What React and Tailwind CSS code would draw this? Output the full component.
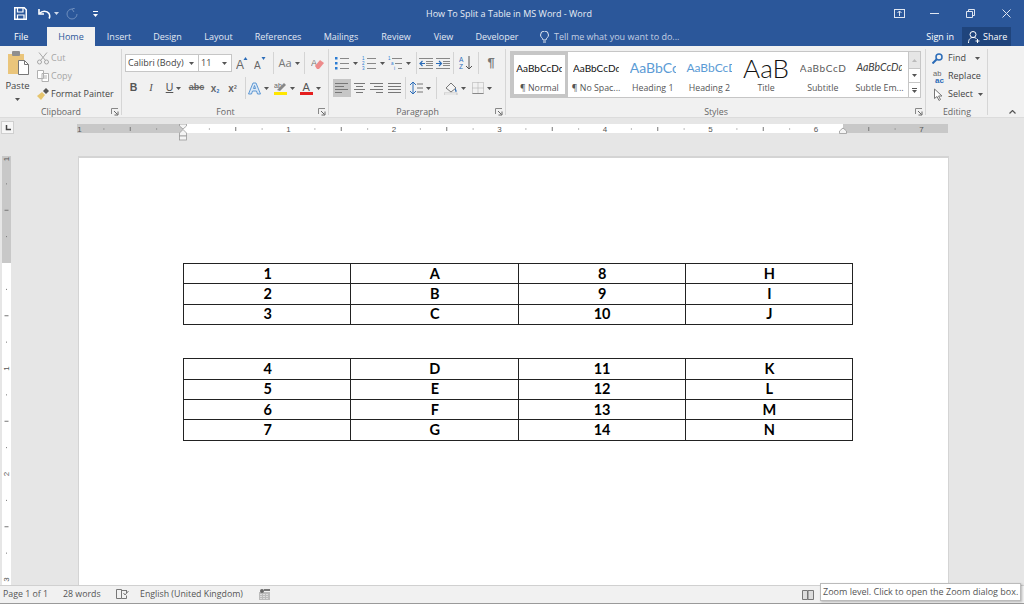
import React from 'react';

const Caret = ({ color = '#555' }) => (
  <svg width="5" height="3" viewBox="0 0 5 3" className="shrink-0"><path d="M0 0h5L2.5 3z" fill={color} /></svg>
);

const Launcher = () => (
  <svg width="8" height="8" viewBox="0 0 8 8" className="absolute right-[3px] bottom-[1px]">
    <path d="M.5 6V.5H7" fill="none" stroke="#888" />
    <path d="M3 3l3.5 3.5M7 3.5V7H3.5" fill="none" stroke="#666" />
  </svg>
);

const Sep = ({ h = 'h-[22px]' }) => <div className={`w-px ${h} bg-[#d4d4d4] shrink-0`} />;

// list glyph used by the paragraph buttons
const Lines = ({ kind }) => {
  const rows = {
    left: [[0, 13], [0, 9], [0, 13], [0, 7]],
    center: [[1, 11], [3, 7], [1, 11], [3, 7]],
    right: [[0, 13], [4, 9], [0, 13], [6, 7]],
    just: [[0, 13], [0, 13], [0, 13], [0, 13]],
  }[kind];
  return (
    <svg width="14" height="10" viewBox="0 0 14 10">
      {rows.map(([x, w], i) => <rect key={i} x={x} y={i * 3} width={w} height="1" fill="#777" />)}
    </svg>
  );
};

const ListIcon = ({ type }) => (
  <svg width="15" height="14" viewBox="0 0 15 14">
    {[1, 6, 11].map((y, i) => (
      <g key={y}>
        {type === 'bullet' && <rect x="0" y={y} width="2.5" height="2.5" fill="#2b7cd3" />}
        {type === 'number' && <text x="0" y={y + 3} fontSize="4.5" fill="#2b7cd3" fontFamily="Liberation Sans">{i + 1}</text>}
        {type === 'multi' && <text x={i * 3} y={y + 3} fontSize="4.5" fill="#2b7cd3" fontFamily="Liberation Sans">{['1', 'a', 'i'][i]}</text>}
        <rect x={type === 'multi' ? 4 + i * 3 : 5} y={y + 1} width={type === 'multi' ? 10 - i * 3 : 9} height="1" fill="#888" />
      </g>
    ))}
  </svg>
);

const Indent = ({ dir }) => (
  <svg width="14" height="11" viewBox="0 0 14 11">
    {[0, 10].map((y) => <rect key={y} x="0" y={y} width="14" height="1" fill="#888" />)}
    {[3, 5, 7].map((y) => <rect key={y} x="7" y={y} width="7" height="1" fill="#888" />)}
    <path d={dir === 'l' ? 'M6 5.5H1M3.5 3L1 5.5 3.5 8' : 'M0 5.5h5M3 3l2.5 2.5L3 8'} fill="none" stroke="#2b6cb8" strokeWidth="1.2" />
  </svg>
);

const Cell = ({ w, children, active }) => (
  <div className={`${w} h-[18px] shrink-0 flex items-center justify-center gap-[3px] ${active ? 'bg-[#c6c6c6]' : ''}`}>{children}</div>
);

const Group = ({ w, label, launcher, children }) => (
  <div className={`${w} h-full shrink-0 flex flex-col relative`}>
    <div className="flex-1 min-h-0">{children}</div>
    <div className="h-[9px] text-center text-[8.800px] leading-[9px] text-[#666] whitespace-nowrap">{label}</div>
    {launcher && <Launcher />}
    <div className="absolute right-0 top-[3px] bottom-[2px] w-px bg-[#d6d6d6]" />
  </div>
);

const ClipboardGroup = () => (
  <Group w="w-[122px]" label="Clipboard" launcher>
    <div className="flex h-full">
      <div className="w-[35px] flex flex-col items-center pt-[5px]">
        <svg width="24" height="25" viewBox="0 0 24 25" className="ml-[3px]">
          <path d="M1 3h16v20H1z" fill="#eac57b" />
          <rect x="5" y="0" width="8" height="5" rx="1" fill="#8f8f8f" />
          <path d="M11.500 9.500h6l4 4v10h-10z" fill="#fff" stroke="#777" />
          <path d="M17.500 9.500v4h4" fill="none" stroke="#777" />
        </svg>
        <div className="text-[9.500px] leading-[13px] mt-[3px] text-[#444]">Paste</div>
        <div className="mt-[6px]"><Caret /></div>
      </div>
      <div className="flex flex-col pt-[3px] pl-[2px] text-[9px] leading-[18px]">
        <div className="flex items-center gap-[2px] h-[18px] text-[#a6a6a6]">
          <svg width="12" height="13" viewBox="0 0 12 13"><path d="M2 .5l6.500 8M10 .5L3.500 8.500" stroke="#a6a6a6" fill="none" /><circle cx="2.500" cy="10" r="2" fill="none" stroke="#a6a6a6" /><circle cx="9.500" cy="10" r="2" fill="none" stroke="#a6a6a6" /></svg>
          Cut
        </div>
        <div className="flex items-center gap-[2px] h-[18px] text-[#a6a6a6]">
          <svg width="12" height="12" viewBox="0 0 12 12"><path d="M.5.500h6v8h-6zM5 3.500h6.500v8H5z" fill="#fff" stroke="#b0b0b0" /><path d="M6.500 6h3.500M6.500 8h3.500" stroke="#b0b0b0" /></svg>
          Copy
        </div>
        <div className="flex items-center gap-[2px] h-[18px] text-[#444] whitespace-nowrap">
          <svg width="12" height="12" viewBox="0 0 12 12"><path d="M0 8l5-4 3 3-4 5z" fill="#e6c56e" /><path d="M6 3l3-3 3 3-3 3z" fill="#555" /></svg>
          Format Painter
        </div>
      </div>
    </div>
  </Group>
);

const FontGroup = () => (
  <Group w="w-[207px]" label="Font" launcher>
    <div className="pl-[3px] pt-[8px] flex flex-col">
      <div className="flex items-center h-[18px]">
        <div className="w-[74px] h-[18px] bg-white border border-[#c6c6c6] flex items-center justify-between px-[2px] pr-[4px] text-[9px] text-[#444] whitespace-nowrap">Calibri (Body)<Caret /></div>
        <div className="w-[33px] h-[18px] bg-white border border-l-0 border-[#c6c6c6] flex items-center justify-between px-[2px] pr-[4px] text-[9px] text-[#444]">11<Caret /></div>
        <Cell w="w-[18px] ml-[1px]">
          <svg width="13" height="13" viewBox="0 0 13 13"><text x="0" y="12" fontSize="12" fill="#666" fontFamily="Liberation Sans">A</text><path d="M7.500 3L9.500 0l2 3z" fill="#2b6cb8" /></svg>
        </Cell>
        <Cell w="w-[18px]">
          <svg width="13" height="13" viewBox="0 0 13 13"><text x="0" y="12" fontSize="10" fill="#666" fontFamily="Liberation Sans">A</text><path d="M7.500 0l2 3 2-3z" fill="#2b6cb8" /></svg>
        </Cell>
        <div className="w-[4px]" /><Sep />
        <Cell w="w-[30px]"><span className="text-[11px] text-[#777]">Aa</span><Caret /></Cell>
        <Sep />
        <Cell w="w-[24px]">
          <svg width="13" height="13" viewBox="0 0 13 13"><text x="0" y="9" fontSize="9" fill="#777" fontFamily="Liberation Sans">A</text><path d="M4 9l5-6 4 3-5 6H6z" fill="#ed8b8b" /></svg>
        </Cell>
      </div>
      <div className="flex items-center h-[18px] mt-[7px]">
        <Cell w="w-[17px]"><span className="text-[10.500px] font-bold text-[#555] font-['Liberation_Sans']">B</span></Cell>
        <Cell w="w-[18px]"><span className="text-[10.500px] italic text-[#555] font-['Liberation_Serif']">I</span></Cell>
        <Cell w="w-[27px]"><span className="text-[10.500px] underline text-[#555] font-['Liberation_Sans']">U</span><Caret /></Cell>
        <Cell w="w-[19px]"><span className="text-[9px] font-bold text-[#666] line-through font-['Liberation_Sans']">abc</span></Cell>
        <Cell w="w-[18px]"><span className="text-[10px] font-bold text-[#666] font-['Liberation_Sans']">x<sub className="text-[5px] text-[#2b6cb8]">2</sub></span></Cell>
        <Cell w="w-[17px]"><span className="text-[10px] font-bold text-[#666] font-['Liberation_Sans']">x<sup className="text-[5px] text-[#666]">2</sup></span></Cell>
        <div className="w-[4px]" /><Sep />
        <Cell w="w-[25px]">
          <svg width="13" height="13" viewBox="0 0 13 13"><path d="M5 1h3l4.500 11h-3l-1-3H4.500l-1 3h-3zM5.500 6.500h2L6.500 3.500z" fill="#dbe8f6" stroke="#4f8fd0" strokeWidth=".9" /></svg>
          <Caret />
        </Cell>
        <Cell w="w-[26px]">
          <svg width="13" height="14" viewBox="0 0 13 14"><text x="0" y="7" fontSize="7" fill="#666" fontFamily="Liberation Sans">ab</text><path d="M3 9l7-7 2 2-6 6z" fill="#888" /><rect x="0" y="11" width="13" height="3" fill="#ffe600" /></svg>
          <Caret />
        </Cell>
        <Cell w="w-[26px]">
          <svg width="13" height="14" viewBox="0 0 13 14"><text x="2.500" y="10" fontSize="11" fill="#555" fontFamily="Liberation Sans">A</text><rect x="0" y="11" width="13" height="3" fill="#e51f1f" /></svg>
          <Caret />
        </Cell>
      </div>
    </div>
  </Group>
);

const ParagraphGroup = () => (
  <Group w="w-[177px]" label="Paragraph" launcher>
    <div className="pl-[4px] pt-[8px] flex flex-col">
      <div className="flex items-center h-[18px]">
        <Cell w="w-[27px]"><ListIcon type="bullet" /><Caret /></Cell>
        <Cell w="w-[26px]"><ListIcon type="number" /><Caret /></Cell>
        <Cell w="w-[27px]"><ListIcon type="multi" /><Caret /></Cell>
        <div className="w-[3px]" /><Sep />
        <Cell w="w-[17px]"><Indent dir="l" /></Cell>
        <Cell w="w-[17px]"><Indent dir="r" /></Cell>
        <div className="w-[2px]" /><Sep />
        <Cell w="w-[24px]">
          <svg width="14" height="14" viewBox="0 0 14 14"><text x="0" y="6" fontSize="6.500" fill="#2b6cb8" fontFamily="Liberation Sans">A</text><text x="0" y="13" fontSize="6.500" fill="#2b6cb8" fontFamily="Liberation Sans">Z</text><path d="M10 0v13M7 10l3 3 3-3" fill="none" stroke="#555" /></svg>
        </Cell>
        <Sep />
        <Cell w="w-[24px]"><span className="text-[13px] font-bold text-[#777] font-['Liberation_Sans']">¶</span></Cell>
      </div>
      <div className="flex items-center h-[18px] mt-[7px]">
        <Cell w="w-[18px]" active><Lines kind="left" /></Cell>
        <Cell w="w-[17px]"><Lines kind="center" /></Cell>
        <Cell w="w-[18px]"><Lines kind="right" /></Cell>
        <Cell w="w-[17px]"><Lines kind="just" /></Cell>
        <div className="w-[2px]" /><Sep />
        <Cell w="w-[27px] ml-[1px]">
          <svg width="13" height="13" viewBox="0 0 13 13"><path d="M3 0v12M0 3l3-3 3 3M0 9l3 3 3-3" fill="none" stroke="#2b6cb8" /><path d="M7 2h6M7 6h6M7 10h6" stroke="#777" /></svg>
          <Caret />
        </Cell>
        <div className="w-[2px]" /><Sep />
        <Cell w="w-[27px] ml-[4px]">
          <svg width="14" height="14" viewBox="0 0 14 14"><path d="M2 7l5-5 5 5-5 4z" fill="#f4f4f4" stroke="#777" /><path d="M11 7c2 2 2 4 1 4s-1-2-1-4z" fill="#2b6cb8" /><rect x="0" y="12" width="13" height="2" fill="#fff" stroke="#999" strokeWidth=".5" /></svg>
          <Caret />
        </Cell>
        <Cell w="w-[27px]">
          <svg width="12" height="12" viewBox="0 0 12 12"><path d="M.5.500h11v11H.5zM6 .5v11M.5 6h11" fill="none" stroke="#aaa" strokeDasharray="1 1" /><path d="M.5 11.500h11" stroke="#888" /></svg>
          <Caret />
        </Cell>
      </div>
    </div>
  </Group>
);

const styleItems = [
  { s: 'AaBbCcDd', label: '¶ Normal', cls: 'text-[10px] text-[#111]' },
  { s: 'AaBbCcDd', label: '¶ No Spac...', cls: 'text-[10px] text-[#111]' },
  { s: 'AaBbCcDd', label: 'Heading 1', cls: 'text-[14px] text-[#5b9bd5]' },
  { s: 'AaBbCcDd', label: 'Heading 2', cls: 'text-[12px] text-[#5b9bd5]' },
  { s: 'AaB', label: 'Title', cls: 'text-[26px] text-[#111] font-light' },
  { s: 'AaBbCcDd', label: 'Subtitle', cls: 'text-[10px] text-[#5a5a5a] tracking-[0.6px]' },
  { s: 'AaBbCcDd', label: 'Subtle Em...', cls: 'text-[10.500px] text-[#404040] italic' },
];

const StylesGroup = () => (
  <Group w="w-[420px]" label="Styles" launcher>
    <div className="pl-[4px] pt-[5px] flex">
      <div className="h-[47px] w-[399px] bg-white border border-[#c6c6c6] flex overflow-hidden">
        {styleItems.map((it, i) => (
          <div key={i} className={`w-[56.700px] h-full shrink-0 flex flex-col items-center overflow-hidden ${i === 0 ? 'border-[3px] border-[#c6c6c6]' : 'border-[3px] border-white'}`}>
            <div className={`h-[25px] shrink-0 flex items-center w-[46px] overflow-hidden whitespace-nowrap font-['Lato'] leading-none ${it.cls}`}>{it.s}</div>
            <div className="text-[8.800px] leading-[12px] mt-[2px] text-[#555] whitespace-nowrap">{it.label}</div>
          </div>
        ))}
      </div>
      <div className="w-[12px] h-[47px] flex flex-col border border-l-0 border-[#c6c6c6] bg-white">
        <div className="h-[16px] bg-[#e6e6e6] flex items-center justify-center"><svg width="5" height="3" viewBox="0 0 5 3"><path d="M0 3h5L2.500 0z" fill="#bbb" /></svg></div>
        <div className="h-[15px] border-y border-[#c6c6c6] flex items-center justify-center"><Caret /></div>
        <div className="flex-1 flex flex-col items-center justify-center gap-[1px]"><div className="w-[5px] h-px bg-[#555]" /><Caret /></div>
      </div>
    </div>
  </Group>
);

const EditingGroup = () => (
  <Group w="w-[62px]" label="Editing">
    <div className="pt-[3px] pl-[6px] text-[9px] text-[#444] flex flex-col">
      <div className="h-[18px] flex items-center gap-[5px]">
        <svg width="11" height="11" viewBox="0 0 11 11"><circle cx="7" cy="4" r="3" fill="none" stroke="#2b6cb8" strokeWidth="1.500" /><path d="M5 6L.5 10.500" stroke="#2b6cb8" strokeWidth="2" /></svg>
        Find<span className="ml-[4px]"><Caret /></span>
      </div>
      <div className="h-[18px] flex items-center gap-[3px]">
        <svg width="13" height="13" viewBox="0 0 13 13"><text x="1" y="6" fontSize="7.500" fill="#666" fontFamily="Liberation Sans">ab</text><text x="3" y="12.500" fontSize="8" fontWeight="bold" fill="#2b6cb8" fontFamily="Liberation Sans">ac</text></svg>
        Replace
      </div>
      <div className="h-[18px] flex items-center gap-[5px]">
        <svg width="10" height="13" viewBox="0 0 10 13" className="ml-[1px]"><path d="M1.500 1v9.500l2.500-2 2 4 1.500-1-2-3.500h3.500z" fill="#fff" stroke="#777" /></svg>
        Select<Caret />
      </div>
    </div>
  </Group>
);

const TitleBar = () => (
  <div className="h-[27px] flex items-center relative text-white">
    <div className="w-[14px]" />
    <svg width="13" height="13" viewBox="0 0 13 13"><path d="M.75.750h9.500l2 2v9.500H.75z" fill="none" stroke="#fff" strokeWidth="1.500" /><path d="M3.500 1v4h5.500V1M3.500 12V8h6.500v4" fill="none" stroke="#fff" strokeWidth="1.200" /></svg>
    <svg width="13" height="12" viewBox="0 0 13 12" className="ml-[11px]"><path d="M1 1v5h5" fill="none" stroke="#fff" strokeWidth="1.600" /><path d="M1.500 5.500C4 2.500 9 2.500 11 5.500c1 2 1 3.500 0 5" fill="none" stroke="#fff" strokeWidth="1.600" /></svg>
    <div className="ml-[3px]"><Caret color="#cfd9ea" /></div>
    <svg width="12" height="12" viewBox="0 0 12 12" className="ml-[7px]"><path d="M6 1a5 5 0 1 0 5 5M6 1l3-1M6 1l2 3" fill="none" stroke="#6e8ebd" /></svg>
    <svg width="5" height="6" viewBox="0 0 5 6" className="ml-[15px]"><rect y="0" width="5" height="1" fill="#fff" /><path d="M0 3h5L2.500 6z" fill="#fff" /></svg>
    <div className="flex-1 text-center text-[9px] text-[#e8edf5] pl-[26px]">How To Split a Table in MS Word - Word</div>
    <svg width="11" height="9" viewBox="0 0 11 9" className="mr-[3px]"><rect x=".5" y=".5" width="10" height="8" fill="none" stroke="#dfe6f1" /><path d="M5.500 7V2M3.500 4l2-2 2 2" fill="none" stroke="#dfe6f1" /></svg>
    <div className="w-[31px] flex justify-end"><div className="w-[9px] h-px bg-[#dfe6f1]" /></div>
    <svg width="9" height="9" viewBox="0 0 9 9" className="ml-[27px]"><path d="M.5 2.500h6v6h-6zM2.500 2.500v-2h6v6h-2" fill="none" stroke="#dfe6f1" /></svg>
    <svg width="9" height="9" viewBox="0 0 9 9" className="ml-[27px] mr-[13px]"><path d="M.5.500l8 8M8.500.500l-8 8" stroke="#dfe6f1" /></svg>
  </div>
);

const tabs = [
  ['Insert', 'w-[46px]'], ['Design', 'w-[51px]'], ['Layout', 'w-[51px]'], ['References', 'w-[68px]'],
  ['Mailings', 'w-[58px]'], ['Review', 'w-[52px]'], ['View', 'w-[43px]'], ['Developer', 'w-[64px]'],
];

const TabRow = () => (
  <div className="h-[19px] flex items-stretch text-[9px] leading-[20px] text-[#e3e9f3]">
    <div className="w-[47px] pl-[14px] text-white">File</div>
    <div className="w-[48px] bg-[#f1f1f1] text-[#2b579a] text-center">Home</div>
    <div className="w-[1px]" />
    {tabs.map(([t, w]) => <div key={t} className={`${w} text-center shrink-0`}>{t}</div>)}
    <div className="ml-[11px] flex items-center gap-[5px] text-[#c4d0e3] whitespace-nowrap">
      <svg width="9" height="12" viewBox="0 0 9 12"><path d="M3 9C3 7 .5 6.500.5 4a4 4 0 0 1 8 0C8.500 6.500 6 7 6 9zM3 11h3" fill="none" stroke="#dfe6f1" /></svg>
      Tell me what you want to do...
    </div>
    <div className="flex-1" />
    <div className="text-white mr-[8px]">Sign in</div>
    <div className="w-[49px] bg-[#1f447c] flex items-center gap-[3px] pl-[6px] mr-[13px] text-white">
      <svg width="12" height="12" viewBox="0 0 12 12"><circle cx="5" cy="3.500" r="3" fill="none" stroke="#fff" /><path d="M.5 12c0-4 2-5.500 4.500-5.500S8 7 8.500 8M9.500 8v4M7.500 10h4" fill="none" stroke="#fff" /></svg>
      Share
    </div>
  </div>
);

// horizontal ruler, 105.500px to the inch from the left margin
const Ruler = () => {
  const inch = 105.5;
  const x0 = 106;
  const ticks = [];
  for (let i = -4; i < 32; i++) {
    const x = x0 + (i * inch) / 4;
    if (x < 2 || x > 870 || i % 4 === 0) continue;
    ticks.push(i % 2 === 0
      ? <rect key={i} x={x - 0.5} y="3" width="1" height="4" fill="#777" />
      : <rect key={i} x={x - 0.5} y="4.500" width="1" height="1" fill="#777" />);
  }
  return (
    <svg width="871" height="18" viewBox="0 0 871 18" className="block">
      <rect x="0" y="0" width="871" height="9" fill="#c8c8c8" />
      <rect x="106" y="0" width="660" height="9" fill="#fff" />
      {ticks}
      {[[-1, '1'], [1, '1'], [2, '2'], [3, '3'], [4, '4'], [5, '5'], [6, '6'], [7, '7']].map(([n, t]) => (
        <text key={n} x={n === -1 ? 2.5 : x0 + n * inch} y="8" textAnchor="middle" fontSize="8" fill="#555" fontFamily="Liberation Sans">{t}</text>
      ))}
      <path d="M102.500 0h7v2L106 5l-3.500-3zM102.500 9l3.500-3.500L109.500 9v3h-7z" fill="#f4f4f4" stroke="#999" strokeWidth=".8" />
      <rect x="102.500" y="12" width="7" height="4" fill="#f4f4f4" stroke="#999" strokeWidth=".8" />
      <path d="M762.500 9v-2l3.500-3 3.500 3v2.500h-7z" fill="#f4f4f4" stroke="#999" strokeWidth=".8" />
    </svg>
  );
};

const VRuler = () => {
  const inch = 105.5;
  const y0 = 107;
  const ticks = [];
  for (let i = -4; i < 14; i++) {
    const y = y0 + (i * inch) / 4;
    if (y < 3 || y > 428 || i % 4 === 0) continue;
    ticks.push(i % 2 === 0
      ? <rect key={i} x="2.500" y={y - 0.5} width="4" height="1" fill="#777" />
      : <rect key={i} x="4" y={y - 0.5} width="1" height="1" fill="#777" />);
  }
  return (
    <svg width="9" height="429" viewBox="0 0 9 429" className="block">
      <rect width="9" height="429" fill="#fff" />
      <rect width="9" height="107" fill="#c8c8c8" />
      {ticks}
      {[[-1, '1'], [1, '1'], [2, '2'], [3, '3']].map(([n, t]) => {
        const y = n === -1 ? 3 : y0 + n * inch;
        return <text key={n} x="4.500" y={y + 2.500} transform={`rotate(-90 4.500 ${y})`} textAnchor="middle" fontSize="8" fill="#555" fontFamily="Liberation Sans">{t}</text>;
      })}
    </svg>
  );
};

const WordTable = ({ rows, className }) => (
  <table className={`w-[670px] table-fixed border-collapse font-['Lato'] font-bold text-[14.500px] text-black ${className}`}>
    <tbody>
      {rows.map((r, i) => (
        <tr key={i} className="h-[20.400px]">
          {r.map((c, j) => <td key={j} className="border border-[#222] text-center p-0 pl-[1px] leading-[18px]">{c}</td>)}
        </tr>
      ))}
    </tbody>
  </table>
);

const StatusBar = () => (
  <div className="h-[19px] bg-[#f1f1f1] border-t border-[#d0d0d0] border-b border-b-[#9a9a9a] flex items-center text-[8.800px] text-[#555] relative">
    <span className="ml-[3px] w-[60px]">Page 1 of 1</span>
    <span className="w-[53px]">28 words</span>
    <svg width="13" height="11" viewBox="0 0 13 11"><path d="M.5.500h5v9h-5zM5.500 1.500h5M10.500 1v3M5.500 9.500h5v-3" fill="none" stroke="#777" /><path d="M7.500 4l1.500 2 3.500-4" fill="none" stroke="#777" /></svg>
    <span className="ml-[11px] w-[119px] whitespace-nowrap">English (United Kingdom)</span>
    <svg width="11" height="11" viewBox="0 0 11 11"><rect x="0" y="3" width="11" height="8" fill="#bbb" /><circle cx="3" cy="2" r="2" fill="#666" /><rect x="5" y="0" width="6" height="2" fill="#777" /><path d="M2 5v5M5 5v5M8 5v5" stroke="#fff" strokeDasharray="1 1" /></svg>
    <div className="flex-1" />
    <svg width="12" height="10" viewBox="0 0 12 10" className="mr-[210px]"><path d="M.5.500h5v9h-5zM6 .5h5.500v9H6z" fill="#ddd" stroke="#777" /></svg>
    <div className="absolute left-[820px] top-[-3px] w-[201px] h-[18px] bg-white border border-[#bbb] shadow-[1px_1px_2px_rgba(0,0,0,0.25)] text-[9px] leading-[16px] text-[#555] pl-[2px] whitespace-nowrap">
      Zoom level. Click to open the Zoom dialog box.
    </div>
  </div>
);

export default function App() {
  return (
    <div className="w-[1024px] h-[604px] overflow-hidden flex flex-col bg-[#e6e6e6] font-['Open_Sans',sans-serif]">
      <div className="bg-[#2b579a] h-[46px] shrink-0">
        <TitleBar />
        <TabRow />
      </div>
      <div className="h-[72px] bg-[#f1f1f1] border-b border-[#dcdcdc] flex shrink-0 relative">
        <ClipboardGroup />
        <FontGroup />
        <ParagraphGroup />
        <StylesGroup />
        <EditingGroup />
        <svg width="7" height="4" viewBox="0 0 7 4" className="absolute left-[1009px] top-[64px]"><path d="M.5 3.500l3-3 3 3" fill="none" stroke="#555" strokeWidth="1.200" /></svg>
      </div>
      <div className="flex-1 min-h-0 flex flex-col">
        <div className="h-[38px] shrink-0 flex">
          <div className="w-[13px] h-[13px] ml-[1px] mt-[3px] bg-[#f6f6f6] border border-[#cfcfcf] flex items-center justify-center">
            <svg width="6" height="6" viewBox="0 0 6 6"><path d="M1.500 0v4.500H6" fill="none" stroke="#444" strokeWidth="1.500" /></svg>
          </div>
          <div className="ml-[63px] mt-[6px]"><Ruler /></div>
        </div>
        <div className="flex-1 min-h-0 flex">
          <div className="w-[78px] shrink-0 pl-[2px]"><VRuler /></div>
          <div className="w-[871px] h-[429px] bg-white border-t-2 border-x border-[#d4d4d4] pt-[105px] pl-[104px]">
            <WordTable rows={[['1', 'A', '8', 'H'], ['2', 'B', '9', 'I'], ['3', 'C', '10', 'J']]} />
            <WordTable className="mt-[33px]" rows={[['4', 'D', '11', 'K'], ['5', 'E', '12', 'L'], ['6', 'F', '13', 'M'], ['7', 'G', '14', 'N']]} />
          </div>
        </div>
      </div>
      <StatusBar />
    </div>
  );
}
